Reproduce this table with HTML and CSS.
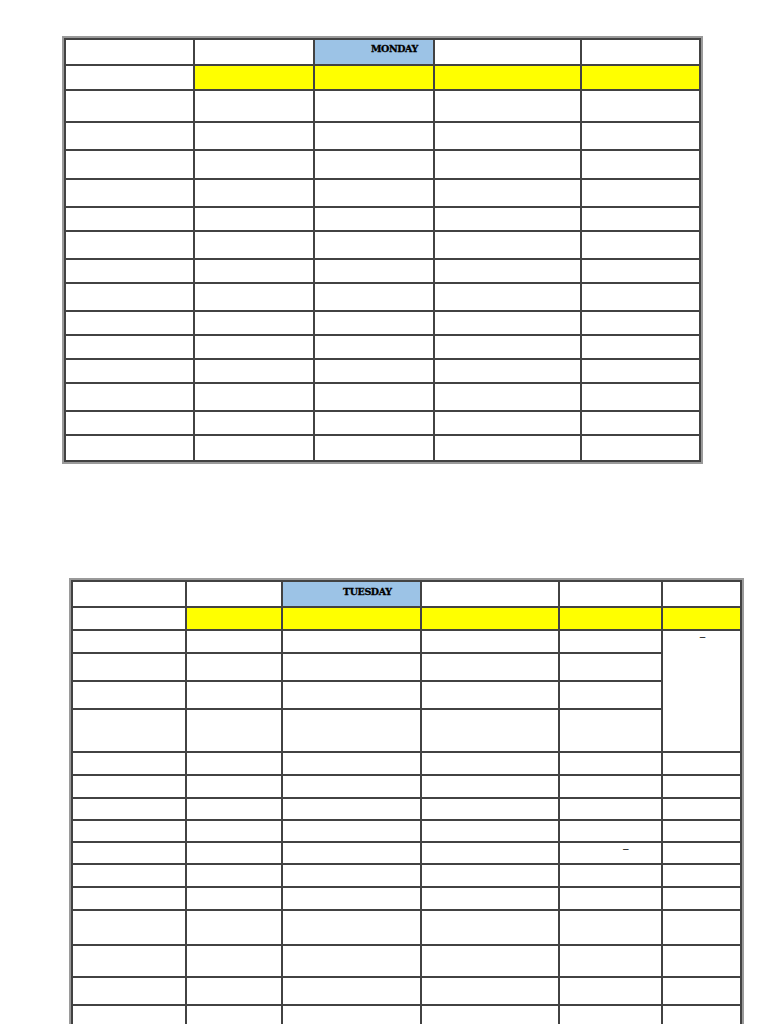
FILE: index.html
```html
<!DOCTYPE html>
<html lang="en">
<head>
<meta charset="utf-8">
<title>Weekly schedule</title>
<link rel="stylesheet" href="styles.css">
</head>
<body>
<div class="sheet sheet-mon">
  <table class="grid grid-mon">
    <colgroup>
      <col class="m1"><col class="m2"><col class="m3"><col class="m4"><col class="m5">
    </colgroup>
    <tbody>
      <tr class="p26"><td></td><td></td><td class="day day-mon">MONDAY</td><td></td><td></td></tr>
      <tr class="p25"><td></td><td class="hl"></td><td class="hl"></td><td class="hl"></td><td class="hl"></td></tr>
      <tr class="p32"><td></td><td></td><td></td><td></td><td></td></tr>
      <tr class="p28"><td></td><td></td><td></td><td></td><td></td></tr>
      <tr class="p29"><td></td><td></td><td></td><td></td><td></td></tr>
      <tr class="p28"><td></td><td></td><td></td><td></td><td></td></tr>
      <tr class="p24"><td></td><td></td><td></td><td></td><td></td></tr>
      <tr class="p28"><td></td><td></td><td></td><td></td><td></td></tr>
      <tr class="p24"><td></td><td></td><td></td><td></td><td></td></tr>
      <tr class="p28"><td></td><td></td><td></td><td></td><td></td></tr>
      <tr class="p24"><td></td><td></td><td></td><td></td><td></td></tr>
      <tr class="p24"><td></td><td></td><td></td><td></td><td></td></tr>
      <tr class="p24"><td></td><td></td><td></td><td></td><td></td></tr>
      <tr class="p28"><td></td><td></td><td></td><td></td><td></td></tr>
      <tr class="p24"><td></td><td></td><td></td><td></td><td></td></tr>
      <tr class="p26"><td></td><td></td><td></td><td></td><td></td></tr>
    </tbody>
  </table>
</div>

<div class="sheet sheet-tue">
  <table class="grid grid-tue">
    <colgroup>
      <col class="t1"><col class="t2"><col class="t3"><col class="t4"><col class="t5"><col class="t6">
    </colgroup>
    <tbody>
      <tr class="p26"><td></td><td></td><td class="day day-tue">TUESDAY</td><td></td><td></td><td></td></tr>
      <tr class="p23"><td></td><td class="hl"></td><td class="hl"></td><td class="hl"></td><td class="hl"></td><td class="hl"></td></tr>
      <tr class="p23"><td></td><td></td><td></td><td></td><td></td><td class="dash dash-c" rowspan="4">–</td></tr>
      <tr class="p28"><td></td><td></td><td></td><td></td><td></td></tr>
      <tr class="p28"><td></td><td></td><td></td><td></td><td></td></tr>
      <tr class="p43"><td></td><td></td><td></td><td></td><td></td></tr>
      <tr class="p23"><td></td><td></td><td></td><td></td><td></td><td></td></tr>
      <tr class="p23"><td></td><td></td><td></td><td></td><td></td><td></td></tr>
      <tr class="p22"><td></td><td></td><td></td><td></td><td></td><td></td></tr>
      <tr class="p22"><td></td><td></td><td></td><td></td><td></td><td></td></tr>
      <tr class="p22"><td></td><td></td><td></td><td></td><td class="dash dash-r">–</td><td></td></tr>
      <tr class="p23"><td></td><td></td><td></td><td></td><td></td><td></td></tr>
      <tr class="p23"><td></td><td></td><td></td><td></td><td></td><td></td></tr>
      <tr class="p35"><td></td><td></td><td></td><td></td><td></td><td></td></tr>
      <tr class="p32"><td></td><td></td><td></td><td></td><td></td><td></td></tr>
      <tr class="p28"><td></td><td></td><td></td><td></td><td></td><td></td></tr>
      <tr class="p26"><td></td><td></td><td></td><td></td><td></td><td></td></tr>
      <tr class="p24"><td></td><td></td><td></td><td></td><td></td><td></td></tr>
    </tbody>
  </table>
</div>
</body>
</html>
```
FILE: styles.css
```css
html, body {
  margin: 0;
  padding: 0;
  background: #ffffff;
  font-family: "Liberation Sans", Arial, sans-serif;
  color: #000;
}

.sheet {
  width: fit-content;
  border: 2px solid #9a9a9a;
}

.sheet-mon {
  margin: 36px 0 0 62px;
}

.sheet-tue {
  margin: 114px 0 0 69px;
}

.grid {
  border-collapse: separate;
  border-spacing: 0;
  table-layout: fixed;
  border-top: 2px solid #424242;
  border-left: 2px solid #424242;
}

.grid td {
  padding: 0;
  border-right: 2px solid #424242;
  border-bottom: 2px solid #424242;
  vertical-align: top;
  font-size: 10px;
  line-height: 12px;
  background: #ffffff;
}

.grid-mon { width: 637px; }
.m1 { width: 129px; }
.m2 { width: 120px; }
.m3 { width: 120px; }
.m4 { width: 147px; }
.m5 { width: 119px; }

.grid-tue { width: 671px; }
.t1 { width: 114px; }
.t2 { width: 96px; }
.t3 { width: 139px; }
.t4 { width: 138px; }
.t5 { width: 103px; }
.t6 { width: 79px; }

.p22 td { height: 20px; }
.p23 td { height: 21px; }
.p24 td { height: 22px; }
.p25 td { height: 23px; }
.p26 td { height: 24px; }
.p28 td { height: 26px; }
.p29 td { height: 27px; }
.p32 td { height: 30px; }
.p35 td { height: 33px; }
.p43 td { height: 41px; }

.grid td.hl {
  background: #ffff00;
}

.grid td.day {
  background: #9cc3e6;
  font-family: "DejaVu Serif", "Liberation Serif", serif;
  font-weight: 900;
  font-size: 9.5px;
  letter-spacing: -0.4px;
  white-space: nowrap;
  -webkit-text-stroke: 0.3px #000;
}

.grid td.day-mon {
  padding: 3px 0 0 56px;
  height: 21px;
}

.grid td.day-tue {
  padding: 4px 0 0 60px;
  height: 20px;
}

.grid td.dash {
  font-size: 10px;
  line-height: 12px;
}

.grid td.dash-c {
  text-align: center;
  padding-left: 2px;
}

.grid td.dash-r {
  padding-left: 63px;
}
```
